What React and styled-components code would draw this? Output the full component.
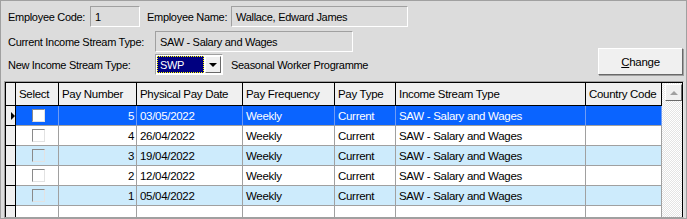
import React from 'react';
import styled, { createGlobalStyle } from 'styled-components';

const Global = createGlobalStyle`
  html, body { margin: 0; padding: 0; background: #dcdcdc; }
  body { font-family: "Liberation Sans", Arial, sans-serif; font-size: 11px; letter-spacing: -0.3px; color: #000; }
  * { box-sizing: border-box; }
`;

const rows = [
  { num: 5, date: '03/05/2022', selected: true },
  { num: 4, date: '26/04/2022' },
  { num: 3, date: '19/04/2022' },
  { num: 2, date: '12/04/2022' },
  { num: 1, date: '05/04/2022' },
];

const columns = ['Select', 'Pay Number', 'Physical Pay Date', 'Pay Frequency', 'Pay Type', 'Income Stream Type', 'Country Code'];

function App() {
  return (
    <>
      <Global />
      <Window>
        <TopSection>
          <Fields>
            <FieldRow>
              <Label w={82}>Employee Code:</Label>
              <TextBox w={50}>1</TextBox>
              <Label w={84} style={{ marginLeft: 7 }}>Employee Name:</Label>
              <TextBox w={177}>Wallace, Edward James</TextBox>
            </FieldRow>
            <FieldRow gap={4}>
              <Label w={147}>Current Income Stream Type:</Label>
              <TextBox w={198}>SAW - Salary and Wages</TextBox>
            </FieldRow>
            <FieldRow gap={2}>
              <Label w={147}>New Income Stream Type:</Label>
              <Combo>
                <ComboField>SWP</ComboField>
                <ComboButton><DownArrow /></ComboButton>
              </Combo>
              <Label style={{ marginLeft: 8 }}>Seasonal Worker Programme</Label>
            </FieldRow>
          </Fields>
          <ChangeButton><u>C</u>hange</ChangeButton>
        </TopSection>

        <GridFrame>
          <GridInner>
            <Table>
              <HeadCell rowHead />
              {columns.map((c) => (
                <HeadCell key={c}>{c}</HeadCell>
              ))}
              {rows.map((r, i) => (
                <React.Fragment key={r.num}>
                  <RowHead>{r.selected && <Pointer />}</RowHead>
                  <Cell sel={r.selected} alt={i % 2 === 0} center>
                    <Check sel={r.selected} />
                  </Cell>
                  <Cell sel={r.selected} alt={i % 2 === 0} right>{r.num}</Cell>
                  <Cell sel={r.selected} alt={i % 2 === 0}>{r.date}</Cell>
                  <Cell sel={r.selected} alt={i % 2 === 0}>Weekly</Cell>
                  <Cell sel={r.selected} alt={i % 2 === 0}>Current</Cell>
                  <Cell sel={r.selected} alt={i % 2 === 0}>SAW - Salary and Wages</Cell>
                  <Cell sel={r.selected} alt={i % 2 === 0} />
                </React.Fragment>
              ))}
              <RowHead />
              {columns.map((c) => (
                <Cell key={'e' + c} />
              ))}
            </Table>
            <ScrollBar>
              <ScrollUp>
                <UpArrow />
              </ScrollUp>
            </ScrollBar>
          </GridInner>
        </GridFrame>
      </Window>
    </>
  );
}

const Window = styled.div`
  width: 687px;
  height: 219px;
  border: 1px solid #a0a0a0;
  background: #dcdcdc;
  padding: 0 2px 0 3px;
  display: flex;
  flex-direction: column;
  overflow: hidden;
`;

const TopSection = styled.div`
  display: flex;
  justify-content: space-between;
  padding: 5px 1px 0 4px;
`;

const Fields = styled.div`
  display: flex;
  flex-direction: column;
`;

const FieldRow = styled.div`
  display: flex;
  align-items: center;
  height: 21px;
  margin-top: ${(p) => p.gap || 0}px;
`;

const Label = styled.span`
  display: inline-block;
  width: ${(p) => (p.w ? p.w + 'px' : 'auto')};
  white-space: nowrap;
`;

const TextBox = styled.div`
  width: ${(p) => p.w}px;
  height: 21px;
  border: 1px solid;
  border-color: #a0a0a0 #ffffff #ffffff #a0a0a0;
  padding: 0 4px;
  display: flex;
  align-items: center;
  white-space: nowrap;
`;

const Combo = styled.div`
  width: 68px;
  height: 21px;
  display: flex;
  border: 1px solid;
  border-color: #a0a0a0 #ffffff #ffffff #a0a0a0;
  padding: 1px;
  background: #fff;
`;

const ComboField = styled.div`
  flex: 1;
  background: #000080;
  color: #fff;
  border: 1px dotted #ffff00;
  display: flex;
  align-items: center;
  padding-left: 2px;
  margin-right: 1px;
`;

const ComboButton = styled.div`
  width: 16px;
  background: #f0f0f0;
  border: 1px solid;
  border-color: #ffffff #696969 #696969 #ffffff;
  display: flex;
  align-items: center;
  justify-content: center;
`;

const DownArrow = styled.span`
  width: 0;
  height: 0;
  border-left: 4px solid transparent;
  border-right: 4px solid transparent;
  border-top: 4px solid #000;
  margin-top: 1px;
`;

const ChangeButton = styled.div`
  align-self: flex-end;
  width: 85px;
  height: 27px;
  background: #f0f0f0;
  border: 1px solid;
  border-color: #ffffff #696969 #696969 #ffffff;
  box-shadow: 1px 1px 0 #a0a0a0;
  display: flex;
  align-items: center;
  justify-content: center;
  font-size: 11.5px;
  u { text-decoration: underline; }
`;

const GridFrame = styled.div`
  margin-top: 6px;
  width: 680px;
  height: 137px;
  border: 1px solid #a0a0a0;
  border-right-color: #e6e6e6;
`;

const GridInner = styled.div`
  height: 135px;
  border: 1px solid #000;
  border-bottom: none;
  display: flex;
  overflow: hidden;
  background: #fff;
`;

const Table = styled.div`
  display: grid;
  grid-template-columns: 10px 43px 78px 106px 92px 61px 190px 76px;
  grid-auto-rows: 20px;
  grid-template-rows: 23px;
  align-content: start;
`;

const HeadCell = styled.div`
  background: #f0f0f0;
  border-right: 1px solid #000;
  border-bottom: 1px solid #000;
  padding-left: ${(p) => (p.rowHead ? 0 : 3)}px;
  display: flex;
  align-items: center;
  white-space: nowrap;
  font-size: 11.5px;
`;

const RowHead = styled.div`
  background: #f0f0f0;
  border-right: 1px solid #000;
  border-bottom: 1px solid #000;
  display: flex;
  align-items: center;
  justify-content: flex-end;
`;

const Pointer = styled.span`
  width: 0;
  height: 0;
  border-top: 4px solid transparent;
  border-bottom: 4px solid transparent;
  border-left: 4px solid #000;
`;

const Cell = styled.div`
  background: ${(p) => (p.sel ? '#0a64ff' : p.alt ? '#cdebfc' : '#ffffff')};
  color: ${(p) => (p.sel ? '#ffffff' : '#000000')};
  border-right: 1px solid ${(p) => (p.sel ? '#6f9cf5' : '#a0a0a0')};
  border-bottom: 1px solid #a0a0a0;
  display: flex;
  align-items: center;
  justify-content: ${(p) => (p.center ? 'center' : p.right ? 'flex-end' : 'flex-start')};
  padding: 0 2px 0 3px;
  white-space: nowrap;
  overflow: hidden;
  font-size: 11.5px;
`;

const Check = styled.span`
  width: 13px;
  height: 13px;
  margin-left: 1px;
  border: 1px solid;
  border-color: #8a8a8a #e2e2e2 #e2e2e2 #8a8a8a;
  background: ${(p) => (p.sel ? '#ffffff' : 'transparent')};
`;

const ScrollBar = styled.div`
  width: 20px;
  background: repeating-conic-gradient(#ffffff 0 25%, #e4e4e4 0 50%) 0 0 / 2px 2px;
  display: flex;
  flex-direction: column;
  align-items: flex-end;
  padding-top: 1px;
`;

const ScrollUp = styled.div`
  width: 17px;
  height: 17px;
  background: #f0f0f0;
  border: 1px solid;
  border-color: #ffffff #696969 #696969 #ffffff;
  display: flex;
  align-items: center;
  justify-content: center;
`;

const UpArrow = styled.span`
  width: 0;
  height: 0;
  border-left: 4px solid transparent;
  border-right: 4px solid transparent;
  border-bottom: 4px solid #a0a0a0;
`;

export default App;
